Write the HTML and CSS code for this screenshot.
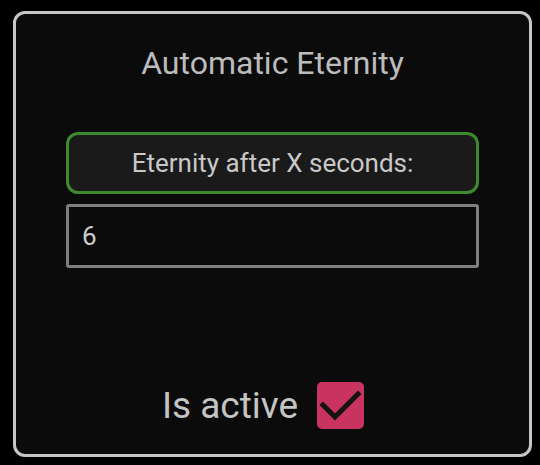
FILE: index.html
```html
<!DOCTYPE html>
<html lang="en">
<head>
    <meta charset="UTF-8">
    <meta name="viewport" content="width=device-width, initial-scale=1.0">
    <title>Automatic Eternity</title>
    <link rel="stylesheet" href="styles.css">
</head>
<body>
    <div class="panel">
        <h1 class="panel-title">Automatic Eternity</h1>
        <div class="field-label">Eternity after X seconds:</div>
        <input class="field-input" type="text" value="6">
        <div class="spacer"></div>
        <label class="toggle-row">
            <span class="toggle-text">Is active</span>
            <span class="check-box">
                <svg width="47" height="47" viewBox="0 0 47 47">
                    <polyline points="6,23 18,35 41,12" fill="none" stroke="#141414" stroke-width="5" stroke-linecap="square"/>
                </svg>
            </span>
        </label>
    </div>
</body>
</html>
```

FILE: styles.css
```css
body {
    margin: 0;
    padding: 0;
    background-color: #000;
    font-family: Roboto, "Noto Sans", Arial, sans-serif;
}

.panel {
    box-sizing: border-box;
    width: 519px;
    height: 446px;
    margin: 11px 0 0 13px;
    border: 3px solid #c6c6c6;
    border-radius: 12px;
    background-color: #0b0b0b;
    padding: 30px 50px 25px 50px;
    display: flex;
    flex-direction: column;
}

.panel-title {
    margin: 0 0 50px 0;
    font-size: 32px;
    font-weight: 400;
    line-height: 38px;
    color: #bcbcbc;
    text-align: center;
}

.field-label {
    box-sizing: border-box;
    height: 62px;
    border: 3px solid #3d8b2e;
    border-radius: 12px;
    background-color: #1a1a1a;
    color: #c8c8c8;
    font-size: 26px;
    display: flex;
    align-items: center;
    justify-content: center;
}

.field-input {
    box-sizing: border-box;
    margin-top: 10px;
    height: 64px;
    width: 100%;
    border: 3px solid #7e7e7e;
    border-radius: 3px;
    background-color: #0b0b0b;
    color: #cccccc;
    font-family: inherit;
    font-size: 26px;
    padding: 0 13px;
    outline: none;
}

.spacer {
    flex: 1;
}

.toggle-row {
    display: flex;
    align-items: center;
    justify-content: center;
    gap: 19px;
    padding-right: 19px;
}

.toggle-text {
    font-size: 37px;
    color: #c4c4c4;
}

.check-box {
    width: 47px;
    height: 47px;
    border-radius: 5px;
    background-color: #c83360;
    display: block;
}

.check-box svg {
    display: block;
}
```
